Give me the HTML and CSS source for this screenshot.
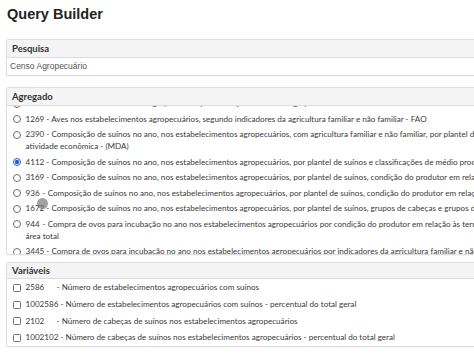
FILE: index.html
```html
<!DOCTYPE html>
<html lang="pt">
<head>
<meta charset="utf-8">
<title>Query Builder</title>
<link rel="stylesheet" href="styles.css">
</head>
<body>
<div class="page">
  <h1 class="title">Query Builder</h1>

  <section class="panel">
    <div class="panel-head">Pesquisa</div>
    <div class="panel-input">Censo Agropecuário</div>
  </section>

  <section class="panel">
    <div class="panel-head">Agregado</div>
    <div class="scroll">
      <ul class="list radios">
        <li><span class="radio"></span><span class="txt"><span class="code">1265</span> - Área dos estabelecimentos agropecuários por utilização das terras e grupos de atividade econômica</span></li>
        <li><span class="radio"></span><span class="txt"><span class="code">1269</span> - Aves nos estabelecimentos agropecuários, segundo indicadores da agricultura familiar e não familiar - FAO</span></li>
        <li><span class="radio"></span><span class="txt"><span class="code">2390</span> - Composição de suínos no ano, nos estabelecimentos agropecuários, com agricultura familiar e não familiar, por plantel de suínos e atividade econômica - (MDA)</span></li>
        <li><span class="radio checked"></span><span class="txt"><span class="code">4112</span> - Composição de suínos no ano, nos estabelecimentos agropecuários, por plantel de suínos e classificações de médio produtor</span></li>
        <li><span class="radio"></span><span class="txt"><span class="code">3169</span> - Composição de suínos no ano, nos estabelecimentos agropecuários, por plantel de suínos, condição do produtor em relação</span></li>
        <li><span class="radio"></span><span class="txt"><span class="code">936</span> - Composição de suínos no ano, nos estabelecimentos agropecuários, por plantel de suínos, condição do produtor em relação</span></li>
        <li><span class="radio"></span><span class="txt"><span class="code">1672</span> - Composição de suínos no ano, nos estabelecimentos agropecuários, por plantel de suínos, grupos de cabeças e grupos de</span><span class="touch"></span></li>
        <li><span class="radio"></span><span class="txt"><span class="code">944</span> - Compra de ovos para incubação no ano nos estabelecimentos agropecuários por condição do produtor em relação às terras e grupos de área total</span></li>
        <li><span class="radio"></span><span class="txt"><span class="code">3445</span> - Compra de ovos para incubação no ano nos estabelecimentos agropecuários por indicadores da agricultura familiar e não familiar</span></li>
      </ul>
    </div>
  </section>

  <section class="panel panel-vars">
    <div class="panel-head">Variáveis</div>
    <ul class="list checks">
      <li><span class="check"></span><span class="txt"><span class="vcode">2586</span> - Número de estabelecimentos agropecuários com suínos</span></li>
      <li><span class="check"></span><span class="txt"><span class="vcode long">1002586</span> - Número de estabelecimentos agropecuários com suínos - percentual do total geral</span></li>
      <li><span class="check"></span><span class="txt"><span class="vcode">2102</span> - Número de cabeças de suínos nos estabelecimentos agropecuários</span></li>
      <li><span class="check"></span><span class="txt"><span class="vcode long">1002102</span> - Número de cabeças de suínos nos estabelecimentos agropecuários - percentual do total geral</span></li>
    </ul>
  </section>
</div>
</body>
</html>
```

FILE: styles.css
```css
html, body {
  margin: 0;
  padding: 0;
  background: #fff;
  overflow: hidden;
}

.page {
  width: 535px;
  padding: 6px 0 0 6px;
}

.title {
  font-family: "Liberation Sans", Arial, sans-serif;
  font-weight: bold;
  font-size: 14.5px;
  line-height: 16px;
  color: #222;
  margin: 0 0 17px 1px;
}

.panel {
  border: 1px solid #dedede;
  border-radius: 2px;
  background: #fff;
  margin-bottom: 11px;
  box-shadow: 0 1px 1px rgba(0,0,0,0.04);
}

.panel-head {
  background: #f4f4f4;
  border-bottom: 1px solid #dcdcdc;
  font-family: Lato, "Open Sans", sans-serif;
  font-weight: 700;
  font-size: 9.5px;
  line-height: 17px;
  height: 17px;
  padding-left: 5px;
  color: #333;
}

.panel-input {
  font-family: "Liberation Sans", Arial, sans-serif;
  font-size: 8.5px;
  line-height: 17px;
  color: #555;
  padding-left: 3px;
}

.scroll {
  height: 148px;
  overflow: hidden;
}

.panel:has(.scroll) {
  margin-bottom: 7px;
}

.panel-vars .panel-head {
  height: 15px;
  line-height: 15px;
}

.list {
  list-style: none;
  margin: 0;
  padding: 0;
  font-family: Lato, "Open Sans", sans-serif;
  font-size: 8.1px;
  color: #3a3a3a;
}

.radios {
  margin-top: -10.5px;
}

.radios li {
  display: flex;
  align-items: flex-start;
  gap: 4.5px;
  padding: 1.75px 6px;
  line-height: 12px;
  position: relative;
}

.checks li {
  display: flex;
  align-items: flex-start;
  gap: 4.5px;
  padding: 2.35px 6px;
  line-height: 12px;
}

.code {
  display: inline-block;
  min-width: 15px;
}

.vcode {
  display: inline-block;
  min-width: 29px;
}

.vcode.long {
  min-width: 0;
}

.radio {
  flex: none;
  width: 6px;
  height: 6px;
  margin-top: 2.5px;
  border: 1px solid #6f6f6f;
  border-radius: 50%;
  background: #fff;
}

.radio.checked {
  border-color: #1a62d6;
  background: radial-gradient(circle, #1a62d6 0 2px, #fff 2.3px);
}

.check {
  flex: none;
  width: 6px;
  height: 6px;
  margin-top: 2.5px;
  border: 1px solid #6f6f6f;
  border-radius: 1.5px;
  background: #fff;
}

.touch {
  position: absolute;
  left: 30px;
  top: -3px;
  width: 11px;
  height: 11px;
  border-radius: 50%;
  background: rgba(110, 110, 110, 0.65);
}
```
